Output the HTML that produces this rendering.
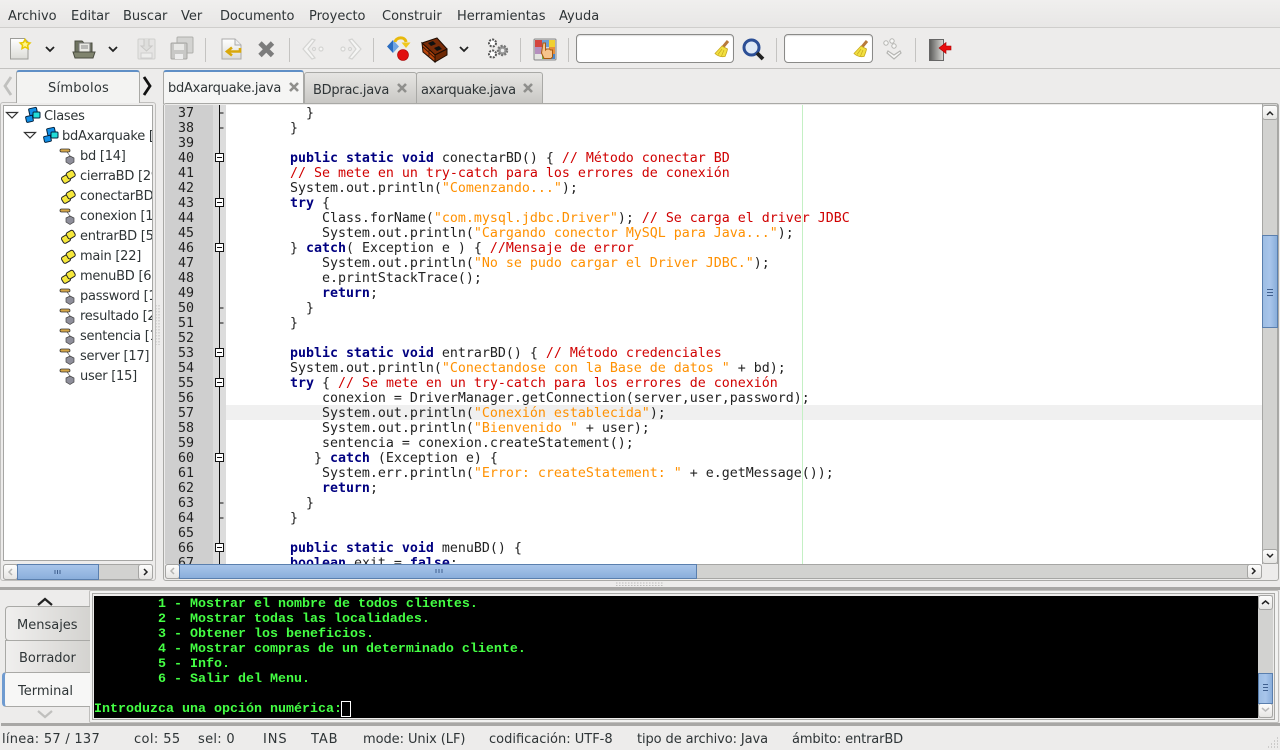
<!DOCTYPE html>
<html><head><meta charset="utf-8"><style>
*{box-sizing:border-box}
html,body{margin:0;padding:0;width:1280px;height:750px;overflow:hidden;background:#edeceb;font-family:"DejaVu Sans",sans-serif;font-size:13px;color:#2e3436}
.a{position:absolute}
.t{position:absolute;white-space:pre;line-height:15px}
.m{top:9px;color:#2e3436}
.code{position:absolute;left:226px;top:105px;width:1036px;height:459px;overflow:hidden;background:#fff}
.code div{height:15px;line-height:15px;padding-left:0;white-space:pre;font-family:"DejaVu Sans Mono",monospace;font-size:13.29px;color:#222}
.code b{color:#000080}
.code i{font-style:normal;color:#d00000}
.code u{text-decoration:none;color:#ff9000}
.nums{position:absolute;left:165px;top:105px;width:48px;height:459px;overflow:hidden;background:#cfcfcf;font-family:"DejaVu Sans Mono",monospace;font-size:13.29px;line-height:15px;text-align:right;padding:1px 19px 0 0;color:#222}
.tree{position:absolute;white-space:pre;line-height:15px;height:15px;overflow:hidden;letter-spacing:-.25px}
.term{position:absolute;left:94px;top:596px;width:1164px;height:122px;padding-top:1px;background:#000;overflow:hidden;font-family:"Liberation Mono",monospace;font-weight:bold;font-size:13.33px;color:#44ff44;line-height:15px;white-space:pre}
.tab{position:absolute;top:72px;height:31px;background:linear-gradient(#e6e5e3,#c9c8c5);border:1px solid #a9a9a6;border-bottom:none;border-radius:3px 3px 0 0}
.sb{position:absolute;background:#d2d2d0}
.th{position:absolute;background:linear-gradient(90deg,#9dbde4,#a8c5ea 50%,#8aaedb);border:1px solid #5a7fae}
.thh{position:absolute;background:linear-gradient(#a8c5ea,#8aaedb);border:1px solid #5a7fae}
.btn{position:absolute;background:linear-gradient(#fdfdfc,#e6e5e3);border:1px solid #a5a5a3;border-radius:3px}
.inp{position:absolute;top:34px;height:29px;background:#fff;border:1px solid #8a8a88;border-radius:4px;box-shadow:inset 0 1px 1px #ddd}
svg{position:absolute;overflow:visible}
.st{top:732px}
</style></head><body>

<!-- menu -->
<div class="a" style="left:0;top:0;width:1280px;height:28px;background:linear-gradient(#f0efee,#e8e7e6);border-bottom:1px solid #cfcecc"></div>
<div class="t m" style="left:8px">Archivo</div>
<div class="t m" style="left:71px">Editar</div>
<div class="t m" style="left:123px">Buscar</div>
<div class="t m" style="left:181px">Ver</div>
<div class="t m" style="left:220px;letter-spacing:-.1px">Documento</div>
<div class="t m" style="left:309px">Proyecto</div>
<div class="t m" style="left:382px">Construir</div>
<div class="t m" style="left:457px">Herramientas</div>
<div class="t m" style="left:559px">Ayuda</div>

<!-- toolbar -->
<div class="a" style="left:0;top:28px;width:1280px;height:41px;background:#edeceb;border-bottom:1px solid #c3c2c0"></div>
<svg style="left:0;top:28px" width="1000" height="41" viewBox="0 0 1000 41">
 <defs>
  <linearGradient id="pg" x1="0" y1="0" x2="0" y2="1"><stop offset="0" stop-color="#fff"/><stop offset="1" stop-color="#dcdcd8"/></linearGradient>
  <linearGradient id="dr" x1="0" y1="0" x2="1" y2="0"><stop offset="0" stop-color="#5a5a58"/><stop offset="1" stop-color="#dcdcd8"/></linearGradient>
 </defs>
 <!-- new -->
 <path d="M10.500 10.500h14l3.500 3.500v17H10.500z" fill="url(#pg)" stroke="#9c9c98"/>
 <path d="M25 11.500l1.700 3 3.300.5-2.400 2.300.6 3.300-3.200-1.600-3 1.600.6-3.300-2.400-2.300 3.300-.5z" fill="#fff68a" stroke="#e8c800" stroke-width="1.500"/>
 <path d="M46 19l4 4 4-4M109 19l4 4 4-4M460 19l4 4 4-4" fill="none" stroke="#222" stroke-width="1.800"/>
 <!-- open -->
 <path d="M75 13h7l2 2h8v10H75z" fill="#6f7360" stroke="#4a4c40"/>
 <path d="M79 15h11v9H79z" fill="#e9e9e4" stroke="#777"/>
 <path d="M73 24h22l-2 6H75z" fill="#80846e" stroke="#4a4c40"/>
 <path d="M81 18h7M81 20h7" stroke="#888"/>
 <!-- save disabled -->
 <g opacity=".6"><rect x="138" y="11" width="17" height="20" rx="1" fill="#e0e0de" stroke="#bdbdba"/><path d="M144 11v7h-3l5.500 5 5.500-5h-3v-7" fill="#d5d5d3" stroke="#b0b0ad"/><rect x="141" y="25" width="11" height="5" fill="#eee" stroke="#bbb"/></g>
 <g opacity=".85"><rect x="177" y="9" width="16" height="16" rx="1" fill="#cfcfcd" stroke="#a5a5a2"/><rect x="171" y="15" width="16" height="16" rx="1" fill="#c2c2c0" stroke="#9a9a97"/><rect x="174" y="16" width="10" height="6" fill="#e8e8e6"/><rect x="175" y="26" width="8" height="5" fill="#eee"/></g>
 <rect x="205" y="10" width="1" height="24" fill="#c4c3c1"/>
 <!-- revert -->
 <path d="M222 11h13l6 6v14h-19z" fill="url(#pg)" stroke="#aaa"/>
 <path d="M235 11v6h6" fill="#eee" stroke="#aaa"/>
 <path d="M240 20v3.500h-11M232 19.500l-5 4 5 4" fill="none" stroke="#d9a80a" stroke-width="2.600"/>
 <!-- close -->
 <path d="M260 15l12.500 12.500M272.500 15L260 27.500" stroke="#7c7c7c" stroke-width="4.800"/>
 <rect x="289" y="10" width="1" height="24" fill="#c4c3c1"/>
 <!-- nav -->
 <g fill="#f5f5f4" stroke="#d4d4d2" stroke-width="1.200">
  <path d="M315 12l-3-1-9 10 9 10 3-1-7-9z"/><circle cx="321" cy="21" r="2"/><circle cx="314" cy="21" r="1.500"/>
  <path d="M349 12l3-1 9 10-9 10-3-1 7-9z"/><circle cx="343" cy="21" r="2"/><circle cx="350" cy="21" r="1.500"/>
 </g>
 <rect x="373" y="10" width="1" height="24" fill="#c4c3c1"/>
 <!-- compile -->
 <path d="M393 12v13l-6-6.500z" fill="#2a6cc0"/><path d="M393 12l6 6.500-6 6.500z" fill="#6ea4e2"/>
 <path d="M395 14c1-5 10-6 11 0" fill="none" stroke="#e8b90c" stroke-width="3"/><path d="M401.500 14.500h9l-4.500 5.500z" fill="#f0c820"/>
 <circle cx="403" cy="27" r="5.500" fill="#e10f0f" stroke="#a30505" stroke-width=".6"/>
 <!-- brick -->
 <path d="M422 15l15-5 10 11-12 6z" fill="#7a2c08" stroke="#1e0c02"/>
 <path d="M422 15l13 12v7l-12-10z" fill="#b8450c" stroke="#1e0c02"/>
 <path d="M435 27l12-6v6l-12 7z" fill="#6e2804" stroke="#1e0c02"/>
 <path d="M428 15l5-2 3 3-5 2zM434 20l5-2 3 3-5 2z" fill="#111"/>
 <path d="M423 19l12 11M429 21v7" stroke="#3a1503" stroke-width=".9"/>
 <!-- gears -->
 <circle cx="492.500" cy="15" r="3.500" fill="#fff" stroke="#555" stroke-width="2" stroke-dasharray="2 1.200"/>
 <circle cx="492.500" cy="26" r="3.500" fill="#fff" stroke="#555" stroke-width="2" stroke-dasharray="2 1.200"/>
 <circle cx="502.500" cy="22.500" r="4.500" fill="#9a9a9a" stroke="#777" stroke-width="2.400" stroke-dasharray="2 1.200"/>
 <circle cx="502.500" cy="22.500" r="1.800" fill="#eee"/>
 <rect x="520" y="10" width="1" height="24" fill="#c4c3c1"/>
 <!-- colors -->
 <rect x="534" y="11" width="22" height="21" rx="1" fill="#ddd" stroke="#888"/>
 <rect x="535" y="12" width="7" height="7" fill="#d4453e"/><rect x="542" y="12" width="7" height="7" fill="#6f9fd2"/><rect x="549" y="12" width="6" height="7" fill="#f0d030"/>
 <rect x="535" y="19" width="7" height="7" fill="#b58fbe"/><rect x="542" y="19" width="7" height="7" fill="#cfd8e8"/><rect x="549" y="19" width="6" height="7" fill="#e8903a"/>
 <rect x="535" y="26" width="7" height="5" fill="#e4e4e0"/><rect x="542" y="26" width="7" height="5" fill="#6cbc4c"/><rect x="549" y="26" width="6" height="5" fill="#4a86c8"/>
 <path d="M543 15h2.500v7l1-1h3l1 1h2v7l-1.500 1.500h-7l-2.500-5.500z" fill="#f6c48c" stroke="#a8590e"/>
 <rect x="568" y="10" width="1" height="24" fill="#c4c3c1"/>
 <!-- magnifier -->
 <circle cx="751.500" cy="19.500" r="7.500" fill="#dfe9f6" stroke="#2c4f96" stroke-width="3"/>
 <path d="M757 25l6 6" stroke="#222" stroke-width="3.800"/>
 <rect x="776" y="10" width="1" height="24" fill="#c4c3c1"/>
 <!-- goto line -->
 <g fill="#f7f7f6" stroke="#b5b5b2"><circle cx="886" cy="15" r="2.200"/><circle cx="892" cy="13" r="2.200"/><circle cx="894" cy="18" r="2.200"/><path d="M888 23l6 4 6-4 1 2-7 6-7-6z" stroke-width="1.200"/></g>
 <rect x="915" y="10" width="1" height="24" fill="#c4c3c1"/>
 <!-- quit -->
 <path d="M929.500 11.500h14v21h-14z" fill="url(#dr)" stroke="#666"/>
 <path d="M951 18h-5v-3.500l-7 5.500 7 5.500V22h5z" fill="#e80e0e" stroke="#a00" stroke-width=".6"/>
</svg>
<div class="inp" style="left:576px;width:158px"></div>
<div class="inp" style="left:784px;width:89px"></div>
<svg style="left:714px;top:38px" width="20" height="20"><path d="M9 9l5-6" stroke="#b87a3a" stroke-width="3"/><path d="M8 8L1 15.500Q5 19.500 11 18.500Q13 14 13.500 11z" fill="#f2e040" stroke="#c8a820" stroke-width=".8"/><path d="M8 11L4 16.500M10 12L7.500 18" stroke="#c8a820" stroke-width=".7"/></svg>
<svg style="left:853px;top:38px" width="20" height="20"><path d="M9 9l5-6" stroke="#b87a3a" stroke-width="3"/><path d="M8 8L1 15.500Q5 19.500 11 18.500Q13 14 13.500 11z" fill="#f2e040" stroke="#c8a820" stroke-width=".8"/><path d="M8 11L4 16.500M10 12L7.500 18" stroke="#c8a820" stroke-width=".7"/></svg>

<!-- sidebar -->
<div class="a" style="left:0;top:102px;width:156px;height:479px;background:#edeceb;border:1px solid #c0bfbd;border-radius:3px"></div>
<div class="a" style="left:16px;top:70px;width:124px;height:33px;background:#f3f3f2;border:1px solid #a9a9a6;border-bottom:none;border-top:2px solid #5f8fc6;border-radius:3px 3px 0 0"></div>
<div class="t" style="left:48px;top:81px;letter-spacing:.25px">Símbolos</div>
<svg style="left:0;top:72px" width="160" height="28"><path d="M11 5l-6 9 6 9" fill="none" stroke="#c0c0be" stroke-width="2.800"/><path d="M144 5l6 9-6 9" fill="none" stroke="#111" stroke-width="2.800"/></svg>
<div class="a" style="left:3px;top:105px;width:150px;height:456px;background:#fff;border:1px solid #a6a6a4"></div>

<div class="tree" style="left:44px;top:109px;width:108px">Clases</div>
<div class="tree" style="left:62px;top:129px;width:90px">bdAxarquake [3]</div>
<div class="tree" style="left:80px;top:149px;width:72px">bd [14]</div>
<div class="tree" style="left:80px;top:169px;width:72px">cierraBD [29]</div>
<div class="tree" style="left:80px;top:189px;width:72px">conectarBD [40]</div>
<div class="tree" style="left:80px;top:209px;width:72px">conexion [11]</div>
<div class="tree" style="left:80px;top:229px;width:72px">entrarBD [53]</div>
<div class="tree" style="left:80px;top:249px;width:72px">main [22]</div>
<div class="tree" style="left:80px;top:269px;width:72px">menuBD [66]</div>
<div class="tree" style="left:80px;top:289px;width:72px">password [16]</div>
<div class="tree" style="left:80px;top:309px;width:72px">resultado [20]</div>
<div class="tree" style="left:80px;top:329px;width:72px">sentencia [19]</div>
<div class="tree" style="left:80px;top:349px;width:72px">server [17]</div>
<div class="tree" style="left:80px;top:369px;width:72px">user [15]</div>
<svg style="left:0;top:105px" width="80" height="285" viewBox="0 105 80 285">
 <defs>
  <g id="cls"><rect x="4" y="0" width="8" height="7" rx="1" fill="#1190e8" stroke="#03213c" stroke-width="1" transform="rotate(-12 8 3)"/><rect x="8" y="4" width="7" height="6" rx="1" fill="#22dcd8" stroke="#03213c" stroke-width="1"/><rect x="1" y="8" width="7" height="6" rx="1" fill="#1190e8" stroke="#03213c" stroke-width="1" transform="rotate(-12 4 11)"/></g>
  <g id="fld"><rect x="0" y="0" width="10" height="3" rx="1.500" fill="#d8a848" stroke="#333" stroke-width=".8"/><path d="M7 3l3 4" stroke="#333" stroke-width=".6"/><path d="M10 7l4 2v4l-4 2.500L6 13V9z" fill="#8e8e9a" stroke="#444" stroke-width=".7"/></g>
  <g id="mth"><rect x="1" y="5.500" width="8" height="7" rx="2" fill="#f6e83c" stroke="#222" stroke-width="1" transform="rotate(-30 5 9)"/><rect x="6" y="1" width="8" height="7" rx="2" fill="#f6e83c" stroke="#222" stroke-width="1" transform="rotate(-30 10 5)"/></g>
 </defs>
 <path d="M6.500 112.500h11l-5.500 5.500zM24.500 132.500h11l-5.500 5.500z" fill="#fff" stroke="#333" stroke-width="1.200"/>
 <use href="#cls" x="25" y="108"/><use href="#cls" x="43" y="128"/>
 <use href="#fld" x="60" y="149"/><use href="#mth" x="61" y="170"/><use href="#mth" x="61" y="190"/>
 <use href="#fld" x="60" y="209"/><use href="#mth" x="61" y="230"/><use href="#mth" x="61" y="250"/><use href="#mth" x="61" y="270"/>
 <use href="#fld" x="60" y="289"/><use href="#fld" x="60" y="309"/><use href="#fld" x="60" y="329"/><use href="#fld" x="60" y="349"/><use href="#fld" x="60" y="369"/>
</svg>
<!-- sidebar hscroll -->
<div class="sb" style="left:3px;top:564px;width:150px;height:16px;border:1px solid #a6a6a4;border-radius:3px"></div>
<div class="btn" style="left:3px;top:564px;width:15px;height:16px"></div>
<div class="btn" style="left:138px;top:564px;width:15px;height:16px"></div>
<div class="thh" style="left:17px;top:564px;width:82px;height:16px"></div>
<svg style="left:0;top:564px" width="160" height="16"><path d="M12 5l-3 3 3 3" fill="none" stroke="#b5b5b3" stroke-width="1.500"/><path d="M144 5l3 3-3 3" fill="none" stroke="#222" stroke-width="1.500"/><path d="M55 6v4M57.500 6v4M60 6v4" stroke="#3f5f8e"/></svg>

<!-- editor tabs -->
<div class="a" style="left:160px;top:68px;width:1120px;height:1px;background:#c3c2c0"></div>
<div class="tab" style="left:304px;width:113px"></div>
<div class="tab" style="left:416px;width:127px"></div>
<div class="a" style="left:163px;top:70px;width:141px;height:34px;background:#f5f5f4;border:1px solid #a9a9a6;border-bottom:none;border-top:2px solid #5f8fc6;border-radius:3px 3px 0 0"></div>
<div class="t" style="left:168px;top:81px;letter-spacing:-.25px">bdAxarquake.java</div>
<div class="t" style="left:313px;top:83px;letter-spacing:-.27px">BDprac.java</div>
<div class="t" style="left:421px;top:83px;letter-spacing:-.35px">axarquake.java</div>
<svg style="left:0;top:80px" width="560" height="18"><path d="M290 3l8 8M298 3l-8 8M398 4l8 8M406 4l-8 8M524 4l8 8M532 4l-8 8" stroke="#8f8f8c" stroke-width="2.600"/></svg>

<!-- editor frame -->
<div class="a" style="left:163px;top:103px;width:1116px;height:478px;background:#edeceb;border:1px solid #a9a9a6;border-radius:3px"></div>
<div class="nums">37
38
39
40
41
42
43
44
45
46
47
48
49
50
51
52
53
54
55
56
57
58
59
60
61
62
63
64
65
66
67</div>
<div class="a" style="left:213px;top:105px;width:13px;height:459px;background:#dcdcdc"></div>
<div class="code">
<div style="position:absolute;left:0;top:300px;width:1036px;height:15px;background:#f0f0f0"></div>
<div style="position:absolute;left:576px;top:0;width:1px;height:459px;background:#c4f0c4"></div>
<div style="position:relative;height:466px;left:0;top:1px;background:transparent"><div>          }</div><div>        }</div><div> </div><div>        <b>public static void</b> conectarBD() { <i>// Método conectar BD</i></div><div>        <i>// Se mete en un try-catch para los errores de conexión</i></div><div>        System.out.println(<u>"Comenzando..."</u>);</div><div>        <b>try</b> {</div><div>            Class.forName(<u>"com.mysql.jdbc.Driver"</u>); <i>// Se carga el driver JDBC</i></div><div>            System.out.println(<u>"Cargando conector MySQL para Java..."</u>);</div><div>        } <b>catch</b>( Exception e ) { <i>//Mensaje de error</i></div><div>            System.out.println(<u>"No se pudo cargar el Driver JDBC."</u>);</div><div>            e.printStackTrace();</div><div>            <b>return</b>;</div><div>          }</div><div>        }</div><div> </div><div>        <b>public static void</b> entrarBD() { <i>// Método credenciales</i></div><div>        System.out.println(<u>"Conectandose con la Base de datos "</u> + bd);</div><div>        <b>try</b> { <i>// Se mete en un try-catch para los errores de conexión</i></div><div>            conexion = DriverManager.getConnection(server,user,password);</div><div>            System.out.println(<u>"Conexión establecida"</u>);</div><div>            System.out.println(<u>"Bienvenido "</u> + user);</div><div>            sentencia = conexion.createStatement();</div><div>           } <b>catch</b> (Exception e) {</div><div>            System.err.println(<u>"Error: createStatement: "</u> + e.getMessage());</div><div>            <b>return</b>;</div><div>          }</div><div>        }</div><div> </div><div>        <b>public static void</b> menuBD() {</div><div>        <b>boolean</b> exit = <b>false</b>;</div></div>
</div>
<svg style="left:213px;top:105px" width="14" height="459" viewBox="0 0 14 459">
 <path d="M6.500 0v459" stroke="#111"/>
 <path d="M6.500 8h4M6.500 23h4M6.500 203h4M6.500 218h4M6.500 398h4M6.500 413h4" stroke="#111"/>
 <g fill="#fff" stroke="#111"><rect x="2.500" y="48.500" width="8" height="8"/><rect x="2.500" y="93.500" width="8" height="8"/><rect x="2.500" y="138.500" width="8" height="8"/><rect x="2.500" y="243.500" width="8" height="8"/><rect x="2.500" y="273.500" width="8" height="8"/><rect x="2.500" y="348.500" width="8" height="8"/><rect x="2.500" y="438.500" width="8" height="8"/></g>
 <path d="M4 52.500h5M4 97.500h5M4 142.500h5M4 247.500h5M4 277.500h5M4 352.500h5M4 442.500h5" stroke="#111"/>
</svg>
<!-- editor v scroll -->
<div class="sb" style="left:1262px;top:104px;width:16px;height:460px;border-left:1px solid #a6a6a4;border-right:1px solid #a6a6a4"></div>
<div class="btn" style="left:1262px;top:105px;width:16px;height:15px"></div>
<div class="btn" style="left:1262px;top:549px;width:16px;height:15px"></div>
<div class="th" style="left:1262px;top:235px;width:16px;height:93px"></div>
<svg style="left:1262px;top:105px" width="16" height="460"><path d="M5 10l3-3 3 3M5 449l3 3 3-3" fill="none" stroke="#222" stroke-width="1.500"/><path d="M5 184.500h6M5 187.500h6M5 190.500h6" stroke="#3f5f8e"/></svg>
<!-- editor h scroll -->
<div class="sb" style="left:165px;top:564px;width:1097px;height:15px;border:1px solid #a6a6a4;border-radius:3px"></div>
<div class="btn" style="left:165px;top:564px;width:15px;height:15px"></div>
<div class="btn" style="left:1247px;top:564px;width:15px;height:15px"></div>
<div class="thh" style="left:179px;top:564px;width:518px;height:15px"></div>
<svg style="left:165px;top:564px" width="1100" height="15"><path d="M9 4l-3 3 3 3" fill="none" stroke="#b5b5b3" stroke-width="1.500"/><path d="M1087 4l3 3-3 3" fill="none" stroke="#222" stroke-width="1.500"/><path d="M271 5v4M274 5v4M277 5v4" stroke="#3f5f8e"/></svg>
<!-- paned grip -->
<svg style="left:616px;top:582px" width="48" height="5"><path d="M0 1h48M0 3.500h48" stroke="#bdbdbb" stroke-dasharray="1.500 1.500"/></svg>
<svg style="left:155px;top:305px" width="6" height="40"><path d="M1 0v40M4 0v40" stroke="#bdbdbb" stroke-dasharray="1.500 1.500"/></svg>

<!-- bottom panel -->
<div class="a" style="left:0;top:587px;width:1280px;height:3px;background:#a8a7a5"></div>
<div class="a" style="left:1px;top:723px;width:1279px;height:3px;background:#a8a7a5"></div>
<div class="a" style="left:89px;top:590px;width:1190px;height:133px;background:#f2f2f1;border:1px solid #c0bfbd;border-radius:2px"></div>
<div class="a" style="left:92px;top:593px;width:1183px;height:127px;background:#edeceb;border:1px solid #a9a9a6"></div>
<svg style="left:30px;top:590px" width="30" height="135"><path d="M8 15l7-6 7 6" fill="none" stroke="#222" stroke-width="2.200"/><path d="M8 121l7 6 7-6" fill="none" stroke="#c0c0be" stroke-width="2.200"/></svg>
<div class="a" style="left:5px;top:606px;width:85px;height:35px;background:linear-gradient(90deg,#f0efee,#d4d3d0);border:1px solid #a9a9a6;border-right:none;border-radius:4px 0 0 4px"></div>
<div class="a" style="left:5px;top:640px;width:85px;height:33px;background:linear-gradient(90deg,#f0efee,#d4d3d0);border:1px solid #a9a9a6;border-right:none"></div>
<div class="a" style="left:2px;top:672px;width:88px;height:35px;background:#f7f7f6;border:1px solid #a9a9a6;border-left:3px solid #6f9bd0;border-right:none;border-radius:4px 0 0 4px"></div>
<div class="t" style="left:17px;top:618px">Mensajes</div>
<div class="t" style="left:19px;top:651px">Borrador</div>
<div class="t" style="left:18px;top:684px">Terminal</div>
<div class="term">        1 - Mostrar el nombre de todos clientes.
        2 - Mostrar todas las localidades.
        3 - Obtener los beneficios.
        4 - Mostrar compras de un determinado cliente.
        5 - Info.
        6 - Salir del Menu.

Introduzca una opción numérica:</div>
<div class="a" style="left:341px;top:701px;width:10px;height:16px;border:1px solid #fff"></div>
<!-- term scroll -->
<div class="sb" style="left:1258px;top:595px;width:15px;height:123px"></div>
<div class="btn" style="left:1258px;top:595px;width:15px;height:15px"></div>
<div class="btn" style="left:1258px;top:703px;width:15px;height:15px"></div>
<div class="th" style="left:1258px;top:673px;width:15px;height:31px"></div>
<svg style="left:1258px;top:595px" width="15" height="123"><path d="M4 9l3.500-3 3.500 3" fill="none" stroke="#222" stroke-width="1.500"/><path d="M4 113l3.500 3 3.500-3" fill="none" stroke="#bbb" stroke-width="1.500"/><path d="M5 89.500h5M5 92.500h5M5 95.500h5" stroke="#3f5f8e"/></svg>

<!-- status -->
<div class="t st" style="left:2px;letter-spacing:.27px">línea: 57 / 137</div>
<div class="t st" style="left:134px;letter-spacing:.4px">col: 55</div>
<div class="t st" style="left:198px;letter-spacing:.3px">sel: 0</div>
<div class="t st" style="left:263px;letter-spacing:.9px">INS</div>
<div class="t st" style="left:311px;letter-spacing:.9px">TAB</div>
<div class="t st" style="left:363px;letter-spacing:-.07px">mode: Unix (LF)</div>
<div class="t st" style="left:489px">codificación: UTF-8</div>
<div class="t st" style="left:637px;letter-spacing:-.1px">tipo de archivo: Java</div>
<div class="t st" style="left:792px;letter-spacing:-.12px">ámbito: entrarBD</div>
<svg style="left:1266px;top:736px" width="14" height="14"><path d="M11 2h1M8 5h1M11 5h1M5 8h1M8 8h1M11 8h1M2 11h1M5 11h1M8 11h1M11 11h1" stroke="#aaa"/></svg>
</body></html>
